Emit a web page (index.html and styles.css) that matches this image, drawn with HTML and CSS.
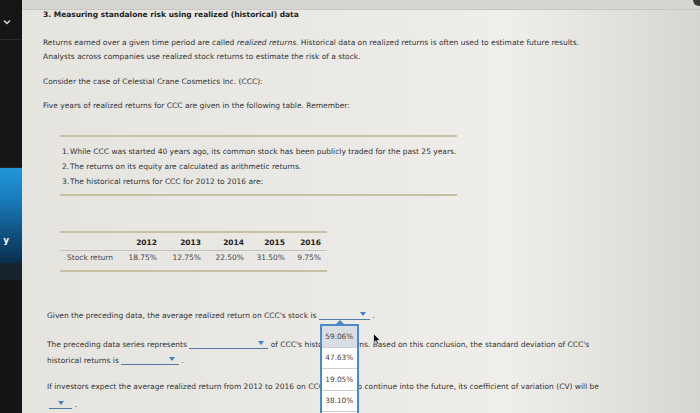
FILE: index.html
```html
<!DOCTYPE html>
<html>
<head>
<meta charset="utf-8">
<link rel="stylesheet" href="styles.css">
</head>
<body>
<div class="screen">
  <aside class="sidebar">
    <div class="side-top">
      <svg class="chev" width="8" height="6" viewBox="0 0 8 6"><path d="M1 1.5 L4 4.5 L7 1.5" fill="none" stroke="#dcdcdc" stroke-width="1.4"/></svg>
    </div>
    <div class="side-fill"></div>
    <div class="side-active"><span class="side-letter">y</span></div>
    <div class="side-dark"></div>
    <div class="side-rest"></div>
  </aside>
  <main class="main">
    <div class="topbar"><span class="corner"></span></div>
    <div class="content">
      <h1 class="title">3. Measuring standalone risk using realized (historical) data</h1>
      <p class="para">Returns earned over a given time period are called <em>realized returns</em>. Historical data on realized returns is often used to estimate future results.<br>Analysts across companies use realized stock returns to estimate the risk of a stock.</p>
      <p class="para consider">Consider the case of Celestial Crane Cosmetics Inc. (CCC):</p>
      <p class="para five">Five years of realized returns for CCC are given in the following table. Remember:</p>

      <div class="notes">
        <div class="note"><span class="num">1.</span><span>While CCC was started 40 years ago, its common stock has been publicly traded for the past 25 years.</span></div>
        <div class="note"><span class="num">2.</span><span>The returns on its equity are calculated as arithmetic returns.</span></div>
        <div class="note"><span class="num">3.</span><span>The historical returns for CCC for 2012 to 2016 are:</span></div>
      </div>

      <table class="returns">
        <colgroup>
          <col class="c-label"><col class="c-2012"><col class="c-2013"><col class="c-2014"><col class="c-2015"><col class="c-2016">
        </colgroup>
        <thead>
          <tr><th></th><th>2012</th><th>2013</th><th>2014</th><th>2015</th><th>2016</th></tr>
        </thead>
        <tbody>
          <tr><td class="label">Stock return</td><td>18.75%</td><td>12.75%</td><td>22.50%</td><td>31.50%</td><td>9.75%</td></tr>
        </tbody>
      </table>

      <div class="questions">
        <p class="q q1">Given the preceding data, the average realized return on CCC's stock is <span class="dd dd-51"><span class="menu"><span class="opt opt-on">59.06%</span><span class="opt">47.63%</span><span class="opt">19.05%</span><span class="opt">38.10%</span><span class="opt"></span></span></span> .</p>
        <p class="q q2">The preceding data series represents <span class="dd dd-79"></span> of CCC's historical returns. Based on this conclusion, the standard deviation of CCC's<br>historical returns is <span class="dd dd-58"></span> .</p>
        <p class="q q3">If investors expect the average realized return from 2012 to 2016 on CCC's stock to continue into the future, its coefficient of variation (CV) will be<br><span class="dd dd-23 dd-last"></span> .</p>
      </div>
      <svg class="cursor" width="8" height="12" viewBox="0 0 8 12"><path d="M0.5 0.5 L0.5 10 L2.8 7.8 L4.4 11.3 L5.8 10.6 L4.3 7.3 L7.3 7.3 Z" fill="#111" stroke="#fff" stroke-width="0.7"/></svg>
    </div>
  </main>
</div>
</body>
</html>
```

FILE: styles.css
```css
* { box-sizing: border-box; margin: 0; padding: 0; }
html, body { width: 700px; height: 413px; overflow: hidden; }
body {
  font-family: "DejaVu Sans", Verdana, sans-serif;
  font-size: 7.5px;
  color: #333;
  background: #111;
}
.screen { display: flex; height: 413px; }

/* sidebar */
.sidebar { width: 22px; flex: none; display: flex; flex-direction: column; background: #151515; overflow: hidden; }
.side-top { height: 40px; padding: 19px 0 0 3px; border-bottom: 1px solid #2a2a2a; }
.chev { display: block; }
.side-fill { height: 128px; background: #161616; border-bottom: 1px solid #242424; }
.side-active {
  height: 95px;
  background: linear-gradient(180deg, #2196d8 0%, #1a7fbf 30%, #10507f 70%, #0b2d4c 100%);
  display: flex; justify-content: flex-end; align-items: flex-start;
  padding: 67px 13px 0 0;
}
.side-letter { color: #fff; font-weight: bold; font-size: 9px; line-height: 10px; }
.side-dark { height: 17px; background: #18232e; }
.side-rest { flex: 1; background: #141414; }

/* main */
.main {
  flex: 1;
  display: flex; flex-direction: column;
  background: linear-gradient(90deg, #e5e4df 0%, #e9e8e4 35%, #edece8 62%, #efeeea 72%, #e4e2dd 86%, #d7d5cf 100%);
}
.topbar {
  height: 10px; flex: none;
  background: #d7d6d2;
  border-bottom: 1px solid #c6c5c1;
  display: flex; justify-content: flex-end;
}
.corner { width: 12px; height: 12px; border-radius: 50%; background: #3a3a3a; margin: -6px -5px 0 0; }

.content { position: relative; flex: 1; padding-left: 21px; }
.title { font-size: 7.5px; font-weight: bold; color: #222; line-height: 10px; }
.para { line-height: 14px; margin-top: 16px; }
.para em { font-style: italic; }
.consider { margin-top: 11px; }
.five { margin-top: 10px; }

/* notes */
.notes {
  width: 397px;
  margin: 22px 0 0 17px;
  border-top: 2px solid #c9bfa4;
  border-bottom: 2px solid #c9bfa4;
  padding: 7px 0 5px 2px;
}
.note { display: flex; line-height: 15px; }
.num { width: 8px; flex: none; }

/* table */
.returns {
  margin: 35px 0 0 17px;
  width: 267px;
  table-layout: fixed;
  border-collapse: collapse;
  border-top: 2px solid #c9bfa4;
  border-bottom: 2px solid #c9bfa4;
}
.c-label { width: 65px; }
.c-2012 { width: 38px; }
.c-2013 { width: 44px; }
.c-2014 { width: 43px; }
.c-2015 { width: 41px; }
.c-2016 { width: 36px; }
.returns th, .returns td { text-align: right; padding: 0 6px 0 0; white-space: nowrap; line-height: 10px; }
.returns th { font-weight: bold; color: #222; height: 18px; padding-top: 4px; vertical-align: middle; border-bottom: 1px solid #c4c2bc; }
.returns td { height: 21px; padding-bottom: 4px; vertical-align: middle; color: #444; }
.returns td.label { text-align: left; padding-left: 7px; }

/* questions */
.questions { margin-left: 4px; }
.q { white-space: nowrap; }
.q1 { margin-top: 37px; line-height: 14px; }
.q2 { margin-top: 14px; line-height: 16px; }
.q3 { margin-top: 9px; line-height: 18px; }

.dd {
  display: inline-block;
  position: relative;
  height: 9px;
  vertical-align: -2px;
  border-bottom: 1px solid #4d7aa6;
}
.dd::after {
  content: "";
  position: absolute;
  right: 4px; top: 1px;
  border-left: 3.5px solid transparent;
  border-right: 3.5px solid transparent;
  border-top: 4px solid #3b82c6;
}
.dd-51 { width: 51px; }
.dd-79 { width: 79px; }
.dd-58 { width: 58px; }
.dd-23 { width: 23px; }
.dd-last { margin-left: 2px; }
.dd-last::after { right: 8px; }

/* open menu */
.menu {
  position: absolute;
  left: 1px; top: 13px;
  width: 39px; height: 100px;
  background: #fff;
  border: 2px solid #4a8ac8;
  display: flex; flex-direction: column;
  z-index: 5;
}
.menu::before {
  content: "";
  position: absolute;
  left: 14px; top: -6px;
  border-left: 4px solid transparent;
  border-right: 4px solid transparent;
  border-bottom: 4px solid #4a8ac8;
}
.opt {
  height: 21.5px; flex: none;
  display: flex; align-items: center; justify-content: center;
  border-bottom: 1px solid #cfcfcf;
  color: #444;
  line-height: 1;
  font-size: 7.3px;
}
.opt-on { background: #d8dee3; }

.cursor { position: absolute; left: 351px; top: 323px; z-index: 6; }
```
